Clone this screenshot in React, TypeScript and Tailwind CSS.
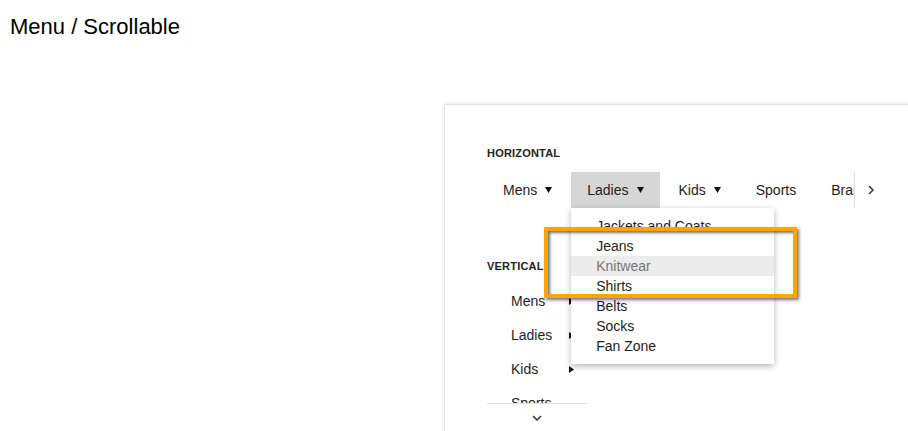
import React from 'react';

const horizontalItems = [
  { label: 'Mens', sub: true },
  { label: 'Ladies', sub: true, open: true },
  { label: 'Kids', sub: true },
  { label: 'Sports', sub: false },
  { label: 'Brands', sub: false },
];

const ladiesItems = ['Jackets and Coats', 'Jeans', 'Knitwear', 'Shirts', 'Belts', 'Socks', 'Fan Zone'];

const verticalItems = ['Mens', 'Ladies', 'Kids', 'Sports', 'Brands'];

function DownTriangle() {
  return (
    <svg width="7" height="6" viewBox="0 0 7 6" className="ml-2 shrink-0">
      <polygon points="0,0 7,0 3.5,6" fill="#111" />
    </svg>
  );
}

function RightTriangle() {
  return (
    <svg width="5" height="7" viewBox="0 0 5 7" className="shrink-0">
      <polygon points="0,0 5,3.5 0,7" fill="#111" />
    </svg>
  );
}

function LadiesDropdown() {
  return (
    <div className="absolute left-0 top-full z-10 flex w-[203px] flex-col bg-white shadow-[0_2px_6px_rgba(0,0,0,0.3)]">
      <div className="h-[12px] shrink-0 bg-white relative z-10" />
      <div className="h-[136px] overflow-hidden">
        <ul className="-mt-[4px]">
          {ladiesItems.map((item) => (
            <li
              key={item}
              className={
                item === 'Knitwear'
                  ? 'h-[20px] bg-[#ececec] pl-[25px] text-[14px] leading-[20px] text-[#767676]'
                  : 'h-[20px] pl-[25px] text-[14px] leading-[20px] text-[#1e1e1e]'
              }>
              {item}
            </li>
          ))}
        </ul>
      </div>
      <div className="h-[8px] shrink-0" />
    </div>
  );
}

export default function App() {
  return (
    <div
      className="relative h-[431px] w-[908px] overflow-hidden bg-white text-[#1e1e1e]"
      style={{ fontFamily: '"Liberation Sans", Arial, sans-serif' }}>
      <h1 className="pl-[10px] pt-[14px] text-[22px] leading-[25px] font-normal text-black">
        Menu / Scrollable
      </h1>

      <div className="ml-[444px] mt-[65px] h-[400px] w-[500px] border border-[#e4e4e4] bg-white pl-[42px] pt-[42px] shadow-[0_0_4px_rgba(0,0,0,0.12)]">
        <p className="text-[11px] leading-[13px] font-bold tracking-[0.2px] text-[#222]">HORIZONTAL</p>

        <div className="mt-[12px] flex h-[36px] w-[420px]">
          <div className="w-[367px] shrink-0 overflow-visible">
            <div className="relative flex h-[36px] gap-[3px]">
              {horizontalItems.map((item) => (
                <div
                  key={item.label}
                  className={
                    item.open
                      ? 'relative flex h-[36px] shrink-0 items-center bg-[#d6d6d6] px-4 text-[14px]'
                      : 'relative flex h-[36px] shrink-0 items-center px-4 text-[14px]'
                  }>
                  {item.label}
                  {item.sub && <DownTriangle />}
                  {item.open && <LadiesDropdown />}
                </div>
              ))}
            </div>
          </div>
          <div className="relative z-20 flex h-[36px] w-[32px] shrink-0 items-center justify-center border-l border-[#e0e0e0] bg-white">
            <svg width="6" height="10" viewBox="0 0 6 10">
              <polyline points="1,1 5,5 1,9" fill="none" stroke="#333" strokeWidth="1.5" />
            </svg>
          </div>
        </div>

        <p className="mt-[52px] text-[11px] leading-[13px] font-bold tracking-[0.2px] text-[#222]">VERTICAL</p>

        <div className="mt-[11px] w-[100px]">
          <div className="h-[119px] overflow-hidden">
            {verticalItems.map((item, i) => (
              <div
                key={item}
                className="flex h-[34px] items-center justify-between pl-[24px] pr-[13px] text-[14px] leading-[20px]">
                {item}
                {i < 3 && <RightTriangle />}
              </div>
            ))}
          </div>
          <div className="flex h-[28px] items-center justify-center border-t border-[#e4e4e4]">
            <svg width="10" height="6" viewBox="0 0 10 6" className="mt-[1px]">
              <polyline points="1,1 5,5 9,1" fill="none" stroke="#333" strokeWidth="1.5" />
            </svg>
          </div>
        </div>
      </div>

      <div className="pointer-events-none absolute left-[544px] top-[227px] z-30 h-[71px] w-[253px] border-4 border-[#ffa400] shadow-[2px_2px_3px_rgba(0,0,0,0.55),inset_2px_2px_3px_rgba(0,0,0,0.55)]" />
    </div>
  );
}
